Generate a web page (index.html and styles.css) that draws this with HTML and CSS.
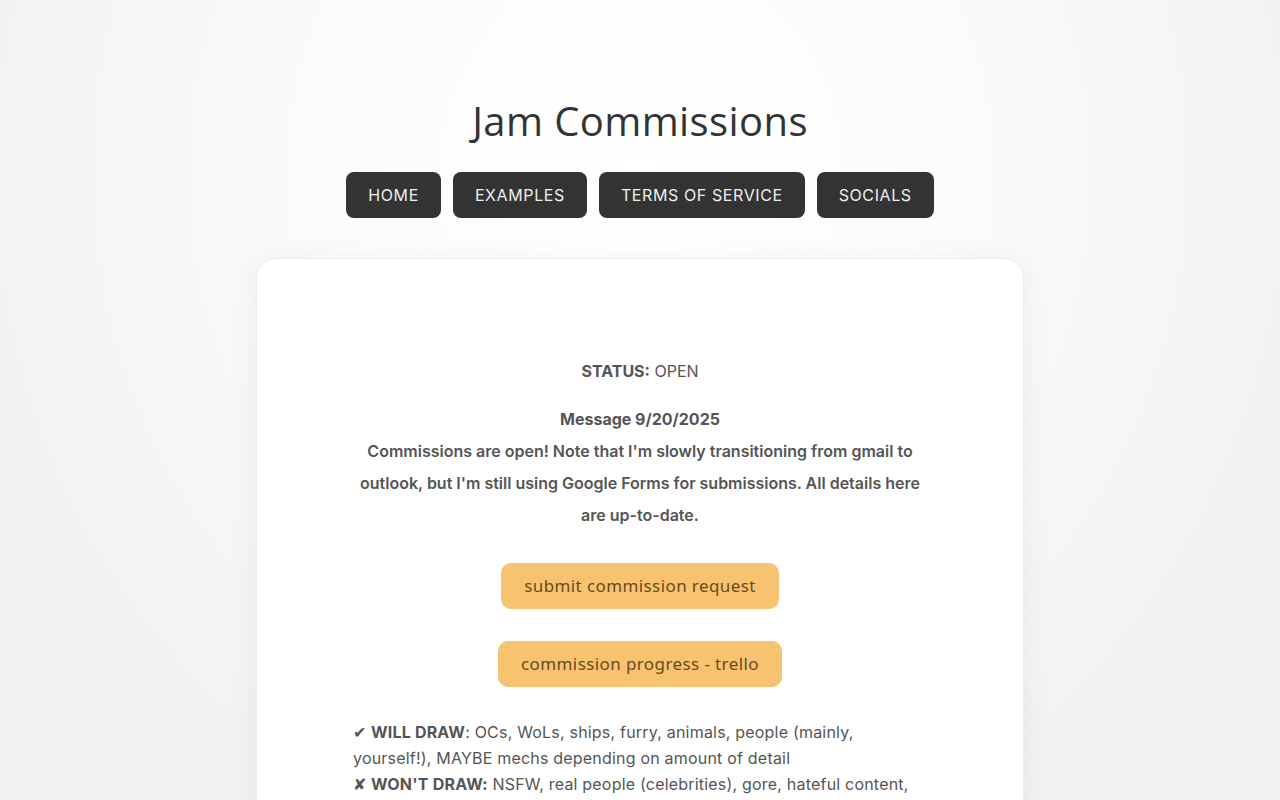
FILE: index.html
```html
<!DOCTYPE html>
<html lang="en">
<head>
    <meta charset="UTF-8">
    <meta name="viewport" content="width=device-width, initial-scale=1.0">
    <title>Jam Commissions</title>
    <link rel="stylesheet" href="styles.css">
</head>
<body>
    <header class="top">
        <h1 class="title">Jam Commissions</h1>
        <nav class="nav">
            <a class="nav-btn" href="#">HOME</a>
            <a class="nav-btn" href="#">EXAMPLES</a>
            <a class="nav-btn" href="#">TERMS OF SERVICE</a>
            <a class="nav-btn" href="#">SOCIALS</a>
        </nav>
    </header>

    <main class="card">
        <p class="status"><b>STATUS:</b> OPEN</p>

        <div class="message">
            <p class="message-title">Message 9/20/2025</p>
            <p>Commissions are open! Note that I'm slowly transitioning from gmail to outlook, but I'm still using Google Forms for submissions. All details here are up-to-date.</p>
        </div>

        <div class="links">
            <a class="link-btn" href="#">submit commission request</a>
            <a class="link-btn" href="#">commission progress - trello</a>
        </div>

        <div class="rules">
            <p>&#10004; <b>WILL DRAW</b>: OCs, WoLs, ships, furry, animals, people (mainly, yourself!), MAYBE mechs depending on amount of detail</p>
            <p>&#10008; <b>WON'T DRAW:</b> NSFW, real people (celebrities), gore, hateful content, heavy armor, complex backgrounds</p>
        </div>
    </main>
</body>
</html>
```

FILE: styles.css
```css
body {
    margin: 0;
    min-height: 100vh;
    background: radial-gradient(ellipse at 50% 20%, #ffffff 0%, #fbfbfb 35%, #f1f1f1 80%);
    font-family: Inter, "Noto Sans", sans-serif;
    color: #555;
}

.top {
    display: flex;
    flex-direction: column;
    align-items: center;
    padding-top: 96px;
}

.title {
    font-family: "Open Sans", sans-serif;
    font-size: 40px;
    font-weight: 500;
    color: #333;
    margin: 0;
    line-height: 50px;
    letter-spacing: 0.4px;
}

.nav {
    display: flex;
    gap: 12px;
    margin-top: 26px;
}

.nav-btn {
    display: block;
    background-color: #333;
    color: #eee;
    text-decoration: none;
    font-size: 16px;
    letter-spacing: 0.6px;
    line-height: 46px;
    padding: 0 22px;
    border-radius: 8px;
}

/* white card holding the page content */
.card {
    width: 574px;
    margin: 40px auto 0;
    padding: 96px 96px 40px;
    background-color: #fff;
    border: 1px solid #eee;
    border-radius: 20px;
    box-shadow: 0 4px 30px rgba(0, 0, 0, 0.06);
    text-align: center;
    font-size: 16px;
}

.card p {
    margin: 0;
}

.status {
    line-height: 32px;
}

.status b {
    font-weight: 700;
}

.message {
    margin-top: 16px;
    font-weight: 600;
    line-height: 32px;
}

.message-title {
    font-weight: 700;
}

.links {
    display: flex;
    flex-direction: column;
    align-items: center;
    gap: 32px;
    margin-top: 32px;
}

.link-btn {
    display: block;
    background-color: #f7c370;
    color: #6a4a1e;
    text-decoration: none;
    font-family: "Noto Sans", sans-serif;
    font-size: 17px;
    letter-spacing: 0.4px;
    line-height: 46px;
    padding: 0 23px;
    border-radius: 10px;
}

.rules {
    margin-top: 32px;
    text-align: left;
    line-height: 26px;
    letter-spacing: 0.2px;
}

.rules b {
    font-weight: 700;
}
```
